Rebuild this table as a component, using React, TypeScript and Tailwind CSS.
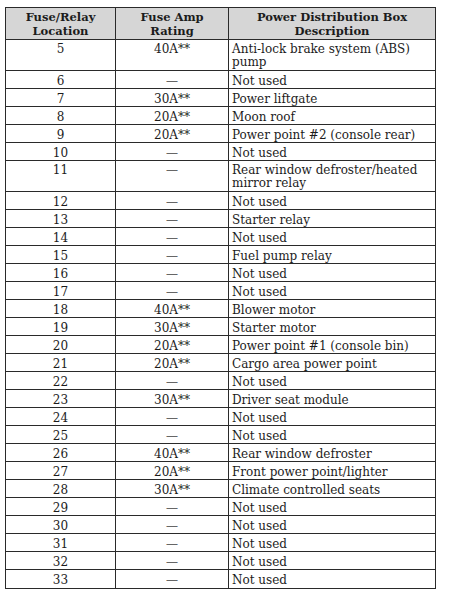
import React from "react";

type Row = { loc: string; amp: string; desc: string[] };

const rows: Row[] = [
  { loc: "5", amp: "40A**", desc: ["Anti-lock brake system (ABS)", "pump"] },
  { loc: "6", amp: "—", desc: ["Not used"] },
  { loc: "7", amp: "30A**", desc: ["Power liftgate"] },
  { loc: "8", amp: "20A**", desc: ["Moon roof"] },
  { loc: "9", amp: "20A**", desc: ["Power point #2 (console rear)"] },
  { loc: "10", amp: "—", desc: ["Not used"] },
  { loc: "11", amp: "—", desc: ["Rear window defroster/heated", "mirror relay"] },
  { loc: "12", amp: "—", desc: ["Not used"] },
  { loc: "13", amp: "—", desc: ["Starter relay"] },
  { loc: "14", amp: "—", desc: ["Not used"] },
  { loc: "15", amp: "—", desc: ["Fuel pump relay"] },
  { loc: "16", amp: "—", desc: ["Not used"] },
  { loc: "17", amp: "—", desc: ["Not used"] },
  { loc: "18", amp: "40A**", desc: ["Blower motor"] },
  { loc: "19", amp: "30A**", desc: ["Starter motor"] },
  { loc: "20", amp: "20A**", desc: ["Power point #1 (console bin)"] },
  { loc: "21", amp: "20A**", desc: ["Cargo area power point"] },
  { loc: "22", amp: "—", desc: ["Not used"] },
  { loc: "23", amp: "30A**", desc: ["Driver seat module"] },
  { loc: "24", amp: "—", desc: ["Not used"] },
  { loc: "25", amp: "—", desc: ["Not used"] },
  { loc: "26", amp: "40A**", desc: ["Rear window defroster"] },
  { loc: "27", amp: "20A**", desc: ["Front power point/lighter"] },
  { loc: "28", amp: "30A**", desc: ["Climate controlled seats"] },
  { loc: "29", amp: "—", desc: ["Not used"] },
  { loc: "30", amp: "—", desc: ["Not used"] },
  { loc: "31", amp: "—", desc: ["Not used"] },
  { loc: "32", amp: "—", desc: ["Not used"] },
  { loc: "33", amp: "—", desc: ["Not used"] },
];

export default function App() {
  return (
    <div
      className="w-[450px] h-[597px] bg-white pt-[7px] pl-[5px] text-[#1c1c1c]"
      style={{ fontFamily: '"DejaVu Serif", serif' }}
    >
      <div className="w-[431px] border-[1.5px] border-[#2a2a2a]">
        <div className="grid grid-cols-[110px_113px_1fr] h-[32px] bg-[#d6d6d6] border-b-[1.5px] border-[#2a2a2a] font-bold text-[11.5px] leading-[14px]">
          <div className="border-r-[1.5px] border-[#2a2a2a] text-center pt-[2px]">
            Fuse/Relay
            <br />
            Location
          </div>
          <div className="border-r-[1.5px] border-[#2a2a2a] text-center pt-[2px]">
            Fuse Amp
            <br />
            Rating
          </div>
          <div className="text-center pt-[2px]">
            Power Distribution Box
            <br />
            Description
          </div>
        </div>
        {rows.map((r, i) => {
          const dbl = r.desc.length > 1;
          return (
            <div
              key={r.loc}
              className={
                "grid grid-cols-[110px_113px_1fr] text-[12px] " +
                (i < rows.length - 1 ? "border-b-[1.5px] border-[#2a2a2a] " : "") +
                (dbl ? "h-[31px] leading-[13px]" : "h-[18px] leading-[12px]")
              }
            >
              <div className={"border-r-[1.5px] border-[#2a2a2a] text-center " + (dbl ? "pt-[3px]" : "pt-[4px]")}>
                {r.loc}
              </div>
              <div
                className={
                  "border-r-[1.5px] border-[#2a2a2a] text-center " +
                  (dbl ? "pt-[3px] " : "pt-[4px] ") +
                  (r.amp === "—" ? "text-[#666]" : "")
                }
              >
                {r.amp}
              </div>
              <div className={"pl-[3px] whitespace-nowrap " + (dbl ? "pt-[3px]" : "pt-[4px]")}>
                {r.desc.map((d, j) => (
                  <div key={j}>{d}</div>
                ))}
              </div>
            </div>
          );
        })}
      </div>
    </div>
  );
}
